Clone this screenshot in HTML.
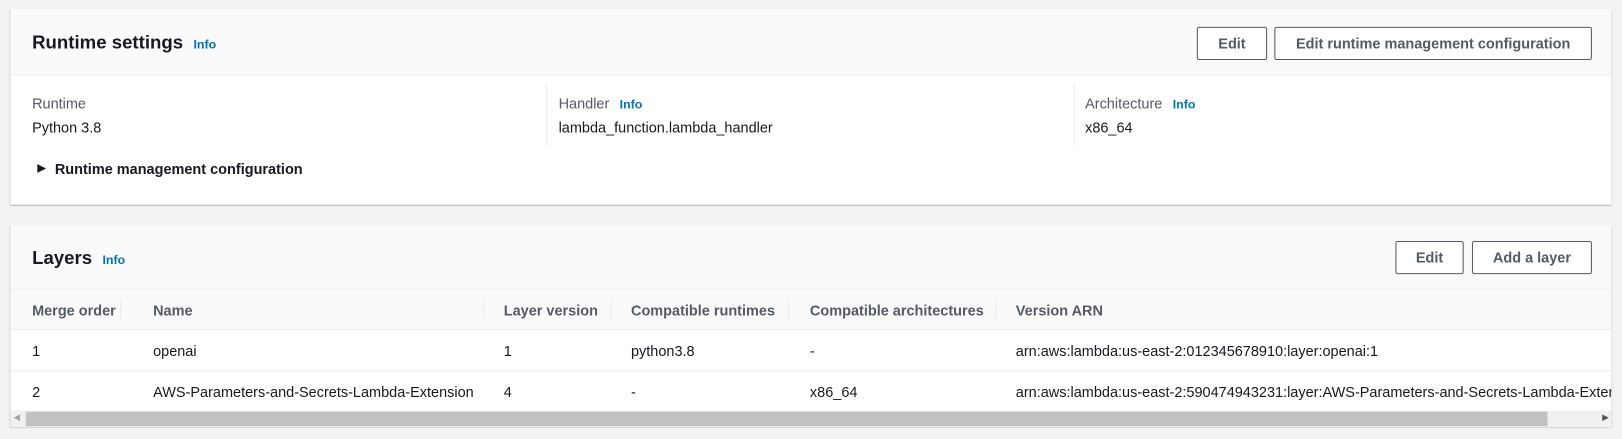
<!DOCTYPE html>
<html><head><style>
*{box-sizing:border-box;margin:0;padding:0}
body{width:1622px;height:438px;background:#f2f3f3;font-family:"Liberation Sans",sans-serif;font-size:14px;color:#16191f;position:relative;overflow:hidden}
#w{position:absolute;left:0;top:0;width:1568px;height:424px;transform:scale(1.0344);transform-origin:0 0}
.card{position:absolute;left:10px;width:1548px;background:#fff;box-shadow:0 1px 1px 0 rgba(0,28,36,.3),1px 1px 1px 0 rgba(0,28,36,.15),-1px 1px 1px 0 rgba(0,28,36,.15);overflow:hidden}
.hdr{position:absolute;left:0;top:0;width:100%;background:#fafafa;border-bottom:1px solid #eaeded}
.title{position:absolute;left:21px;font-size:18px;font-weight:bold}
.info{color:#0073bb;font-size:12px;font-weight:bold;margin-left:10px}
.btn{position:absolute;height:32px;border:1px solid #545b64;border-radius:2px;background:#fff;color:#545b64;font-weight:bold;font-size:14px;line-height:30px;text-align:center}
.abs{position:absolute;white-space:nowrap}
.lbl{color:#545b64}
.vs{position:absolute;width:1px;background:#eaeded}
.th{position:absolute;font-weight:bold;color:#545b64;white-space:nowrap}
.hl{position:absolute;left:0;width:100%;height:1px;background:#eaeded}
</style></head><body><div id="w">
<div class="card" style="top:9px;height:189px">
 <div class="hdr" style="height:64px"></div>
 <div class="title" style="top:22px">Runtime settings<span class="info">Info</span></div>
 <div class="btn" style="left:1147px;top:17px;width:68px">Edit</div>
 <div class="btn" style="left:1222px;top:17px;width:307px">Edit runtime management configuration</div>
 <div class="abs lbl" style="left:21px;top:83px">Runtime</div>
 <div class="abs" style="left:21px;top:106px">Python 3.8</div>
 <div class="vs" style="left:518px;top:72px;height:60px"></div>
 <div class="abs lbl" style="left:530px;top:83px">Handler<span class="info">Info</span></div>
 <div class="abs" style="left:530px;top:106px">lambda_function.lambda_handler</div>
 <div class="vs" style="left:1028px;top:72px;height:60px"></div>
 <div class="abs lbl" style="left:1039px;top:83px">Architecture<span class="info">Info</span></div>
 <div class="abs" style="left:1039px;top:106px">x86_64</div>
 <div class="abs" style="left:26px;top:147px;font-size:11px">&#9654;</div>
 <div class="abs" style="left:43px;top:146px;font-weight:bold">Runtime management configuration</div>
</div>
<div class="card" style="top:218px;height:195px">
 <div class="hdr" style="height:62px"></div>
 <div class="title" style="top:21px">Layers<span class="info">Info</span></div>
 <div class="btn" style="left:1339px;top:15px;width:66px">Edit</div>
 <div class="btn" style="left:1413px;top:15px;width:116px">Add a layer</div>
 <div style="position:absolute;left:0;top:62px;width:100%;height:38px;background:#fafafa"></div>
 <div class="th" style="left:21px;top:74px">Merge order</div>
 <div class="vs" style="left:106px;top:72px;height:19px"></div>
 <div class="th" style="left:138px;top:74px">Name</div>
 <div class="vs" style="left:457px;top:72px;height:19px"></div>
 <div class="th" style="left:477px;top:74px">Layer version</div>
 <div class="vs" style="left:580px;top:72px;height:19px"></div>
 <div class="th" style="left:600px;top:74px">Compatible runtimes</div>
 <div class="vs" style="left:752px;top:72px;height:19px"></div>
 <div class="th" style="left:773px;top:74px">Compatible architectures</div>
 <div class="vs" style="left:952px;top:72px;height:19px"></div>
 <div class="th" style="left:972px;top:74px">Version ARN</div>
 <div class="hl" style="top:100px"></div>
 <div class="abs" style="left:21px;top:113px">1</div>
 <div class="abs" style="left:138px;top:113px">openai</div>
 <div class="abs" style="left:477px;top:113px">1</div>
 <div class="abs" style="left:600px;top:113px">python3.8</div>
 <div class="abs" style="left:773px;top:113px">-</div>
 <div class="abs" style="left:972px;top:113px">arn:aws:lambda:us-east-2:012345678910:layer:openai:1</div>
 <div class="hl" style="top:140px"></div>
 <div class="abs" style="left:21px;top:153px">2</div>
 <div class="abs" style="left:138px;top:153px">AWS-Parameters-and-Secrets-Lambda-Extension</div>
 <div class="abs" style="left:477px;top:153px">4</div>
 <div class="abs" style="left:600px;top:153px">-</div>
 <div class="abs" style="left:773px;top:153px">x86_64</div>
 <div class="abs" style="left:972px;top:153px">arn:aws:lambda:us-east-2:590474943231:layer:AWS-Parameters-and-Secrets-Lambda-Extension:4</div>
 <div style="position:absolute;left:0;top:179px;width:100%;height:16px;background:#f1f1f1"></div>
 <div style="position:absolute;left:15px;top:180px;width:1471px;height:14px;background:#c1c1c1"></div>
 <div class="abs" style="left:3px;top:181px;font-size:8px;color:#a3a3a3">&#9664;</div>
 <div class="abs" style="left:1539px;top:181px;font-size:8px;color:#505050">&#9654;</div>
</div>
</div></body></html>
